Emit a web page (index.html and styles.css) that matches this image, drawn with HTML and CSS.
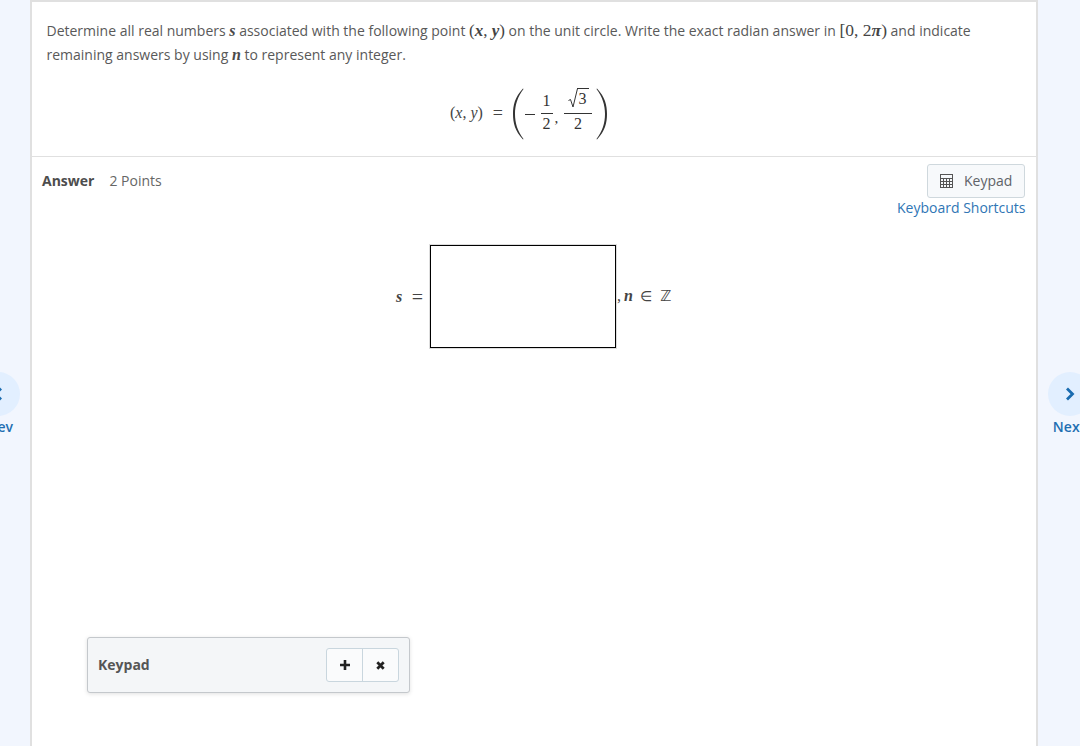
FILE: index.html
```html
<!DOCTYPE html>
<html lang="en">
<head>
<meta charset="utf-8">
<title>Question</title>
<link rel="stylesheet" href="styles.css">
</head>
<body>
<div class="page">
  <aside class="side side-left">
    <a class="nav nav-prev">
      <span class="nav-circle"><svg class="chev" viewBox="0 0 10 14"><path d="M8 1.500 2.500 7 8 12.500" /></svg></span>
      <span class="nav-label">Prev</span>
    </a>
  </aside>
  <main class="card">
    <section class="question">
      <p class="prompt">Determine all real numbers <i class="m">s</i> associated with the following point <span class="m-up">(<i>x</i>, <i>y</i>)</span> on the unit circle. Write the exact radian answer in <span class="m-up m-big">[0, 2<i>π</i>)</span> and indicate remaining answers by using <i class="m">n</i> to represent any integer.</p>
      <div class="equation">
        <span class="eq-lhs"><span>(<i>x</i>, <i>y</i>)</span><span class="eq-sign">=</span></span>
        <svg class="paren" viewBox="0 0 13 52"><path d="M11 .5C3 9 1 17 1 26S3 43 11 51.500L11.500 51C5.500 43 3 35 3 26S5.500 9 11.500 1Z" /></svg>
        <span class="minus"></span>
        <span class="frac"><span class="num">1</span><span class="den">2</span></span>
        <span class="comma">,</span>
        <span class="frac frac-wide">
          <span class="num">
            <svg class="radical" viewBox="0 0 10 20"><path d="M.500 12.500 2.500 11.500 5 19 9.500 .5" /></svg><span class="radicand">3</span>
          </span>
          <span class="den">2</span>
        </span>
        <svg class="paren" viewBox="0 0 13 52"><path d="M2 .5C10 9 12 17 12 26S10 43 2 51.500L1.500 51C7.500 43 10 35 10 26S7.500 9 1.500 1Z" /></svg>
      </div>
    </section>
    <section class="answer">
      <div class="answer-head">
        <div class="answer-title"><strong>Answer</strong><span class="points">2 Points</span></div>
        <div class="tools">
          <button class="keypad-btn" type="button">
            <svg class="calc" viewBox="0 0 13 14"><path d="M.500 .500h12v13H.500zM.500 4.500h12M.500 7.500h12M.500 10.500h12M3.500 4.500v9M6.500 4.500v9M9.500 4.500v9"/></svg>
            <span>Keypad</span>
          </button>
          <a class="shortcuts">Keyboard Shortcuts</a>
        </div>
      </div>
      <div class="response">
        <span class="resp-left"><i>s</i><span class="eq-sign">=</span></span>
        <div class="resp-box"></div>
        <span class="resp-right"><span>,</span><i>n</i><span class="elem">∈</span><span class="dbl">ℤ</span></span>
      </div>
    </section>
    <div class="keypad-panel">
      <strong>Keypad</strong>
      <div class="kp-actions">
        <button class="kp-act" type="button"><svg viewBox="0 0 12 12"><path d="M6 1v10M1 6h10"/></svg></button>
        <button class="kp-act" type="button"><svg class="kp-x" viewBox="0 0 12 12"><path d="M2.500 2.500l7 7M9.500 2.500l-7 7"/></svg></button>
      </div>
    </div>
  </main>
  <aside class="side side-right">
    <a class="nav nav-next">
      <span class="nav-circle"><svg class="chev" viewBox="0 0 10 14"><path d="M2 1.500 7.500 7 2 12.500" /></svg></span>
      <span class="nav-label">Next</span>
    </a>
  </aside>
</div>
</body>
</html>
```
FILE: styles.css
```css
* { box-sizing: border-box; }
html, body { margin: 0; height: 100%; }
body {
  background: #f2f6fe;
  font-family: "Open Sans", sans-serif;
  font-size: 14px;
  line-height: 24px;
  color: #595959;
  overflow: hidden;
}
.page { display: flex; height: 746px; overflow: hidden; }
.side { flex: none; padding-top: 372px; }
.side-left { width: 30px; }
.side-right { width: 42px; padding-left: 10px; }
.nav {
  display: flex;
  flex-direction: column;
  align-items: center;
  width: 44px;
  color: #1f6fb2;
  font-weight: 600;
}
.nav-prev { margin-left: -24px; }
.nav-circle {
  width: 44px;
  height: 44px;
  flex: none;
  border-radius: 50%;
  background: #e2efff;
  display: flex;
  align-items: center;
  justify-content: center;
}
.nav-label { white-space: nowrap; line-height: 22px; }
.nav-next .nav-label { margin-left: -2px; }
.chev { width: 10px; height: 14px; fill: none; stroke: #1a6cb0; stroke-width: 2.800; }
.card {
  position: relative;
  flex: none;
  width: 1008px;
  height: 746px;
  background: #fff;
  border: 2px solid #e0e0e0;
  border-bottom: 0;
}
.question { height: 155px; padding: 17px 15px 0 14.500px; border-bottom: 1px solid #e0e0e0; }
.prompt { margin: 0; width: 950px; }
.m { font-family: "Liberation Serif", serif; font-weight: 700; font-size: 16px; line-height: 1; color: #4a4a4a; }
.m-up { font-family: "Liberation Serif", serif; font-size: 17px; line-height: 1; color: #444; }
.m-up i { font-weight: 700; }
.m-big { font-size: 17.500px; }
.equation {
  display: flex;
  align-items: center;
  margin-top: 21px;
  padding-left: 403.500px;
  height: 52px;
  font-family: "Liberation Serif", serif;
  font-size: 16px;
  line-height: 18px;
  color: #333;
}
.eq-lhs {
  display: flex;
  align-items: center;
  justify-content: space-between;
  width: 53px;
  margin: 0 9px 3px 0;
  white-space: pre;
  color: #444;
  flex: none;
}
.eq-sign { font-size: 18px; line-height: 1; }
.paren { width: 13px; height: 52px; fill: #333; flex: none; }
.minus { flex: none; width: 10px; height: 1px; margin: 0 5.500px 0 0; background: #333; }
.frac { display: flex; flex-direction: column; flex: none; width: 12px; height: 52px; }
.frac .num {
  display: flex;
  align-items: flex-end;
  justify-content: center;
  height: 26px;
  padding-bottom: 3px;
  border-bottom: 1px solid #333;
}
.frac .den { height: 26px; text-align: center; line-height: 20px; }
.frac-wide { width: 28px; margin-right: 3px; }
.comma { flex: none; width: 11.500px; padding: 8px 0 0 2px; font-size: 15px; line-height: 16px; }
.frac-wide .num { padding-bottom: 5px; }
.radical { width: 10px; height: 20px; margin-right: -1px; fill: none; stroke: #333; stroke-width: 1; flex: none; }
.radicand { height: 20px; width: 12px; border-top: 1px solid #333; line-height: 19px; padding-left: 2px; }
.answer { padding: 7px 10px 0; }
.answer-head { display: flex; justify-content: space-between; align-items: flex-start; }
.answer-title { display: flex; gap: 15px; padding-top: 5px; }
.answer-title strong { font-weight: 700; color: #4d4d4d; }
.points { color: #666; }
.tools { display: flex; flex-direction: column; align-items: flex-end; }
.keypad-btn {
  display: flex;
  align-items: center;
  gap: 11px;
  width: 98px;
  height: 34px;
  padding: 0 12px 2px;
  margin-right: 1px;
  background: #f7f9fb;
  border: 1px solid #cfd8dd;
  border-radius: 3px;
  font: 14px "Open Sans", sans-serif;
  color: #5f6368;
}
.calc { width: 13px; height: 14px; margin-top: 2px; fill: none; stroke: #555; stroke-width: 1; flex: none; shape-rendering: crispEdges; }
.shortcuts { color: #2f76b5; line-height: 20px; white-space: nowrap; margin-right: .5px; }
.response {
  display: flex;
  align-items: center;
  margin-top: 27px;
  padding-left: 354px;
  font-family: "Liberation Serif", serif;
  font-size: 16px;
  color: #444;
}
.resp-left { display: flex; align-items: center; justify-content: space-between; width: 27px; margin-right: 7px; }
.resp-left i { font-weight: 700; }
.resp-left .eq-sign { font-size: 20px; }
.resp-box { width: 186px; height: 103px; border: 1px solid #000; flex: none; box-shadow: 0 0 0 1px #ddd; }
.resp-right { display: flex; align-items: baseline; margin-left: 1px; }
.resp-right i { font-weight: 700; margin-left: 3px; }
.elem { font-size: 14px; margin: 0 8px 0 7px; }
.dbl { font-family: "DejaVu Sans", sans-serif; font-size: 15px; }
.keypad-panel {
  position: absolute;
  left: 55px;
  top: 635px;
  width: 323px;
  height: 56px;
  display: flex;
  align-items: center;
  justify-content: space-between;
  padding: 0 10px;
  background: #f4f6f8;
  border: 1px solid #c4c8cc;
  border-radius: 3px;
  box-shadow: 0 1px 4px rgba(0, 0, 0, .12);
}
.keypad-panel strong { font-weight: 700; color: #555; }
.kp-actions { display: flex; border: 1px solid #c9d6de; border-radius: 3px; background: #fafbfc; }
.kp-act {
  width: 35px;
  height: 32px;
  padding: 0;
  background: none;
  border: 0;
  display: flex;
  align-items: center;
  justify-content: center;
}
.kp-act + .kp-act { width: 36px; border-left: 1px solid #c9d6de; }
.kp-act svg { width: 12px; height: 12px; fill: none; stroke: #222; stroke-width: 2.600; }
.kp-act .kp-x { width: 11px; height: 11px; stroke-width: 3; }
```
